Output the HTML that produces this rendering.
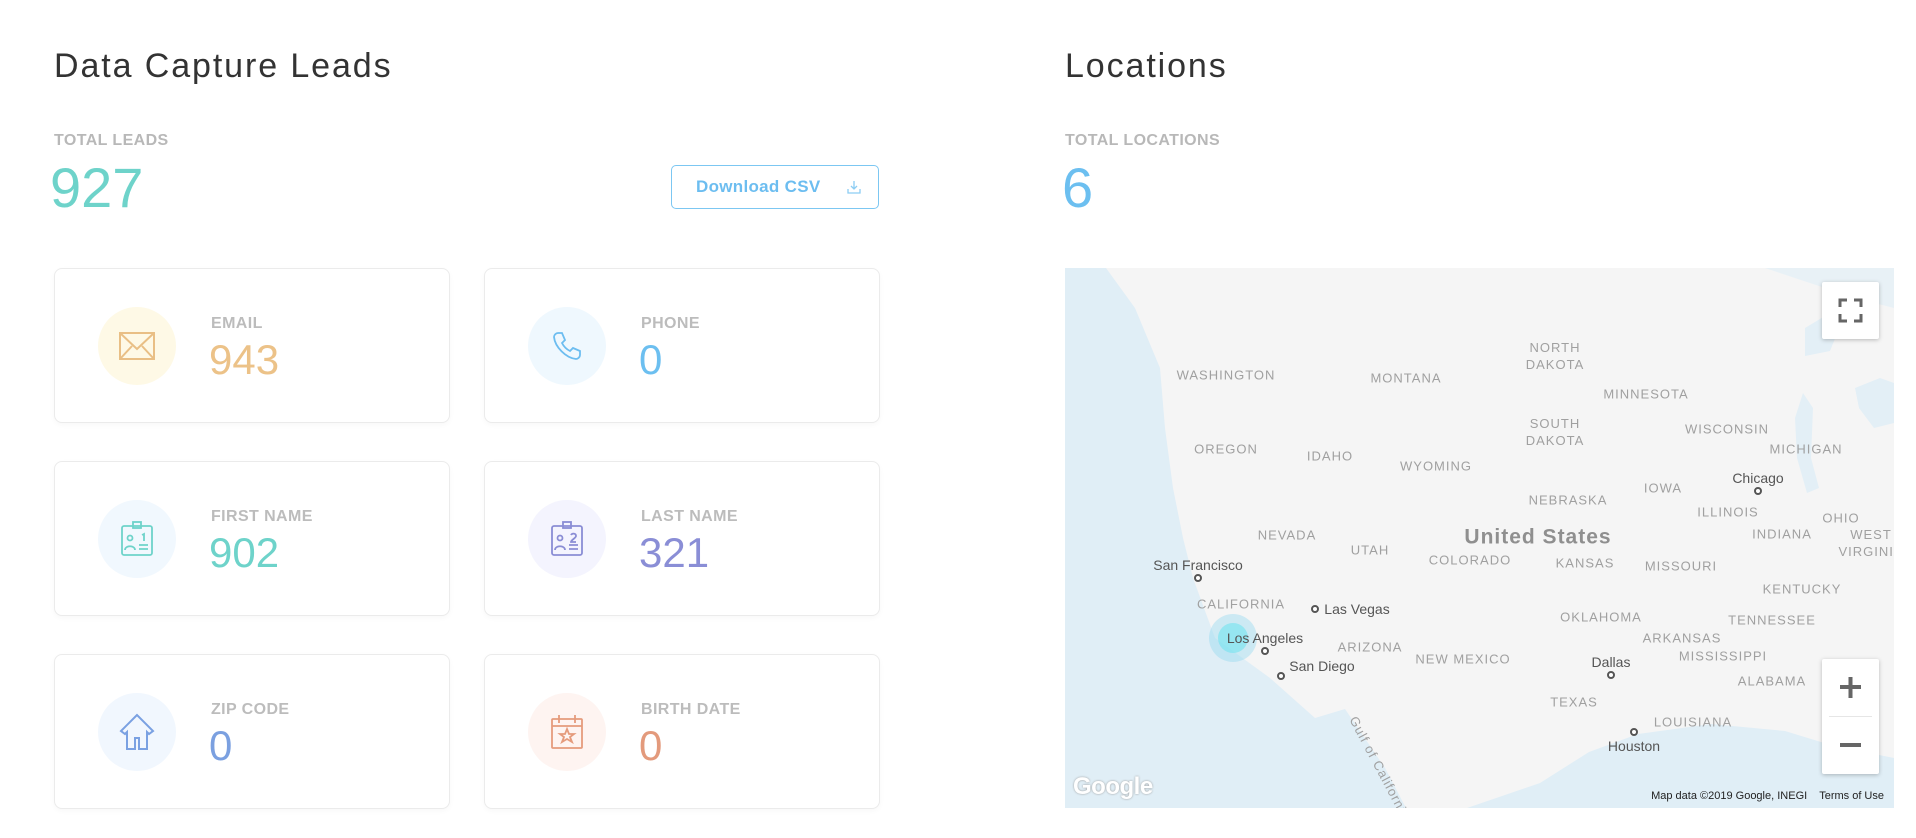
<!DOCTYPE html>
<html><head><meta charset="utf-8"><style>
*{margin:0;padding:0;box-sizing:border-box}
body{width:1916px;height:838px;background:#fff;font-family:"Liberation Sans",sans-serif;position:relative;overflow:hidden}
.abs{position:absolute}
.h1{font-size:34px;color:#333;letter-spacing:1.9px;line-height:1}
.lbl{font-size:16px;font-weight:bold;color:#b8b8b8;letter-spacing:0.4px;line-height:1}
.big{font-size:56px;line-height:1}
.card{position:absolute;width:396px;height:155px;border:1px solid #ebebeb;border-radius:8px;background:#fff;box-shadow:0 2px 6px rgba(0,0,0,0.03)}
.card .ic{position:absolute;left:43px;top:38px;width:78px;height:78px;border-radius:50%;display:flex;align-items:center;justify-content:center}
.card .t{position:absolute;left:156px;top:47px;font-size:16px;font-weight:bold;color:#bcbcbc;letter-spacing:0.4px;line-height:1}
.card .n{position:absolute;left:154px;top:70px;font-size:42px;line-height:1}
.map{position:absolute;left:1065px;top:268px;width:829px;height:540px;background:#f5f5f5;overflow:hidden}
.m{position:absolute;font-size:13px;color:#a0a0a0;letter-spacing:1px;transform:translate(-50%,-50%);white-space:nowrap;line-height:1}
.c{position:absolute;font-size:14px;color:#555;transform:translate(-50%,-50%);white-space:nowrap;line-height:1}
.d{position:absolute;width:8px;height:8px;border:2px solid #555;border-radius:50%;background:#fff;transform:translate(-50%,-50%)}
</style></head><body>
<div class="abs h1" style="left:54px;top:49px">Data Capture Leads</div>
<div class="abs lbl" style="left:54px;top:133px">TOTAL LEADS</div>
<div class="abs big" style="left:50px;top:160px;color:#6ed3ca">927</div>
<div class="abs" style="left:671px;top:165px;width:208px;height:44px;border:1.5px solid #7cc7f2;border-radius:5px;color:#6cbdf0;font-size:17px;font-weight:bold;letter-spacing:0.3px;line-height:41px;padding-left:24px">Download CSV
<svg style="position:absolute;right:16px;top:13px" width="16" height="16" viewBox="0 0 16 16" fill="none" stroke="#8ccdf3" stroke-width="1.3"><path d="M8 2v8M5 7l3 3 3-3M2 10v4h12v-4"/></svg></div>

<div class="card" style="left:54px;top:268px"><div class="ic" style="background:#fef9e6"><svg width="36" height="28" viewBox="0 0 36 28" fill="none" stroke="#e9bf85" stroke-width="2"><rect x="1" y="1" width="34" height="26"/><path d="M1 1l17 16L35 1M1 27l12-13M35 27L23 14"/></svg></div><div class="t">EMAIL</div><div class="n" style="color:#ecc288">943</div></div>
<div class="card" style="left:484px;top:268px"><div class="ic" style="background:#eff8fe"><svg width="32" height="32" viewBox="0 0 32 32" fill="none" stroke="#6cbdf0" stroke-width="1.8"><path d="M7 3l4 0 3 7-3 3c2 4 4 6 8 8l3-3 7 3v4c0 2-2 4-4 4C15 28 4 17 3 7c0-2 2-4 4-4z"/></svg></div><div class="t">PHONE</div><div class="n" style="color:#6cbff0">0</div></div>
<div class="card" style="left:54px;top:461px"><div class="ic" style="background:#f1f8fe"><svg width="34" height="36" viewBox="0 0 34 36" fill="none" stroke="#6ed3ca" stroke-width="1.8"><rect x="2" y="5" width="30" height="29" rx="2"/><rect x="13" y="1" width="8" height="6"/><circle cx="10" cy="17" r="2.5"/><path d="M5 29c0-5 10-5 10 0M22 14l2-1v7M19 24h9M19 28h9"/></svg></div><div class="t">FIRST NAME</div><div class="n" style="color:#6ed3ca">902</div></div>
<div class="card" style="left:484px;top:461px"><div class="ic" style="background:#f4f4fe"><svg width="34" height="36" viewBox="0 0 34 36" fill="none" stroke="#8a8dd5" stroke-width="1.8"><rect x="2" y="5" width="30" height="29" rx="2"/><rect x="13" y="1" width="8" height="6"/><circle cx="10" cy="17" r="2.5"/><path d="M5 29c0-5 10-5 10 0M21 14c1-2 5-2 5 1 0 2-5 4-5 6h5M19 24h9M19 28h9"/></svg></div><div class="t">LAST NAME</div><div class="n" style="color:#8a8ed6">321</div></div>
<div class="card" style="left:54px;top:654px"><div class="ic" style="background:#f1f7fe"><svg width="36" height="38" viewBox="0 0 36 38" fill="none" stroke="#7aa1e2" stroke-width="2"><path d="M18 2L2 18l4 3 2-2v17h8V25h4v11h8V19l2 2 4-3z"/></svg></div><div class="t">ZIP CODE</div><div class="n" style="color:#7ba0e0">0</div></div>
<div class="card" style="left:484px;top:654px"><div class="ic" style="background:#fef4f1"><svg width="34" height="36" viewBox="0 0 34 36" fill="none" stroke="#e59b7c" stroke-width="1.8"><rect x="2" y="5" width="30" height="29" rx="1"/><path d="M2 12h30M9 1v8M25 1v8M17 15l2 5h5l-4 3 2 5-5-3-5 3 2-5-4-3h5z"/></svg></div><div class="t">BIRTH DATE</div><div class="n" style="color:#e39a7c">0</div></div>

<div class="abs h1" style="left:1065px;top:49px">Locations</div>
<div class="abs lbl" style="left:1065px;top:133px">TOTAL LOCATIONS</div>
<div class="abs big" style="left:1062px;top:160px;color:#6cbff0">6</div>

<div class="map">
<svg class="abs" style="left:0;top:0" width="829" height="540" viewBox="0 0 829 540">
<path d="M0 0H41L70 40 95 100 100 160 108 220 118 270 128 310 150 370 205 410 250 450 280 441 320 500 341 540H0Z" fill="#e0eef6"/>
<path d="M250 455L270 470 300 520 310 540 330 540 300 490 275 455Z" fill="#e0eef6"/>
<path d="M402 540L475 515 524 484 573 466 646 456 720 463 769 478 829 490V540Z" fill="#e0eef6"/>
<path d="M700 0H829V40L790 30 760 20Z" fill="#e8f1f6"/>
<path d="M740 60l20-12 15 10-10 25-25 5z" fill="#e3eff6"/>
<path d="M730 150l8-25 10 15-2 50 8 30-12 5-10-35z" fill="#e3eff6"/>
<path d="M790 120l25-10 14 5v40l-20 5-15-20z" fill="#e3eff6"/>
<circle cx="168" cy="370" r="24" fill="#8fd8f0" opacity="0.4"/>
<circle cx="168" cy="370" r="15" fill="#7fe4ef" opacity="0.7"/>
</svg>
<div class="m" style="left:161px;top:107px">WASHINGTON</div>
<div class="m" style="left:341px;top:110px">MONTANA</div>
<div class="m" style="left:490px;top:89px;text-align:center;line-height:1.3">NORTH<br>DAKOTA</div>
<div class="m" style="left:581px;top:126px">MINNESOTA</div>
<div class="m" style="left:490px;top:165px;text-align:center;line-height:1.3">SOUTH<br>DAKOTA</div>
<div class="m" style="left:662px;top:161px">WISCONSIN</div>
<div class="m" style="left:741px;top:181px">MICHIGAN</div>
<div class="m" style="left:161px;top:181px">OREGON</div>
<div class="m" style="left:265px;top:188px">IDAHO</div>
<div class="m" style="left:371px;top:198px">WYOMING</div>
<div class="m" style="left:598px;top:220px">IOWA</div>
<div class="c" style="left:693px;top:210px">Chicago</div><div class="d" style="left:693px;top:223px"></div>
<div class="m" style="left:503px;top:232px">NEBRASKA</div>
<div class="m" style="left:663px;top:244px">ILLINOIS</div>
<div class="m" style="left:776px;top:250px">OHIO</div>
<div class="m" style="left:222px;top:267px">NEVADA</div>
<div class="m" style="left:473px;top:269px;font-size:21px;font-weight:bold;color:#8f8f8f">United States</div>
<div class="m" style="left:305px;top:282px">UTAH</div>
<div class="m" style="left:405px;top:292px">COLORADO</div>
<div class="m" style="left:520px;top:295px">KANSAS</div>
<div class="m" style="left:616px;top:298px">MISSOURI</div>
<div class="m" style="left:717px;top:266px">INDIANA</div>
<div class="m" style="left:806px;top:276px;text-align:center;line-height:1.3">WEST<br>VIRGINIA</div>
<div class="c" style="left:133px;top:297px">San Francisco</div><div class="d" style="left:133px;top:310px"></div>
<div class="m" style="left:176px;top:336px">CALIFORNIA</div>
<div class="c" style="left:292px;top:341px">Las Vegas</div><div class="d" style="left:250px;top:341px"></div>
<div class="m" style="left:536px;top:349px">OKLAHOMA</div>
<div class="m" style="left:707px;top:352px">TENNESSEE</div>
<div class="m" style="left:737px;top:321px">KENTUCKY</div>
<div class="c" style="left:200px;top:370px">Los Angeles</div><div class="d" style="left:200px;top:383px"></div>
<div class="m" style="left:305px;top:379px">ARIZONA</div>
<div class="m" style="left:617px;top:370px">ARKANSAS</div>
<div class="c" style="left:257px;top:398px">San Diego</div><div class="d" style="left:216px;top:408px"></div>
<div class="m" style="left:398px;top:391px">NEW MEXICO</div>
<div class="c" style="left:546px;top:394px">Dallas</div><div class="d" style="left:546px;top:407px"></div>
<div class="m" style="left:658px;top:388px">MISSISSIPPI</div>
<div class="m" style="left:707px;top:413px">ALABAMA</div>
<div class="m" style="left:509px;top:434px">TEXAS</div>
<div class="m" style="left:628px;top:454px">LOUISIANA</div>
<div class="c" style="left:569px;top:478px">Houston</div><div class="d" style="left:569px;top:464px"></div>
<div class="m" style="left:315px;top:500px;transform:translate(-50%,-50%) rotate(62deg)">Gulf of California</div>
<div class="abs" style="left:757px;top:14px;width:57px;height:57px;background:#fff;border-radius:2px;box-shadow:0 1px 4px rgba(0,0,0,0.25)"><svg width="57" height="57" viewBox="0 0 57 57" fill="none" stroke="#666" stroke-width="3"><path d="M18 25v-7h7M32 18h7v7M39 32v7h-7M25 39h-7v-7"/></svg></div>
<div class="abs" style="left:757px;top:391px;width:57px;height:115px;background:#fff;border-radius:2px;box-shadow:0 1px 4px rgba(0,0,0,0.25)"><div style="position:absolute;left:7px;right:7px;top:57px;height:1px;background:#e6e6e6"></div><svg width="57" height="115" viewBox="0 0 57 115" fill="none" stroke="#666" stroke-width="4"><path d="M18 28h21M28.5 18v21M18 86h21"/></svg></div>
<div class="abs" style="left:8px;top:505px;font-size:24px;font-weight:bold;color:#fff;text-shadow:0 0 2px #999;letter-spacing:-0.5px">Google</div>
<div class="abs" style="right:10px;top:522px;font-size:11px;color:#222">Map data ©2019 Google, INEGI &nbsp;&nbsp; Terms of Use</div>
</div>
</body></html>
